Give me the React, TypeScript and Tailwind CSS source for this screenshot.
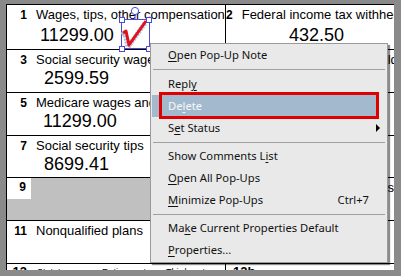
import React from 'react';

// context menu rows, u = index of the mnemonic letter
type MenuRow = { text?: string; u?: number; keys?: string; sub?: boolean; hot?: boolean; sep?: string };

const menu: MenuRow[] = [
  { text: 'Open Pop-Up Note', u: 0 },
  { sep: 'h-[7px]' },
  { text: 'Reply', u: 4 },
  { text: 'Delete', u: 2, hot: true },
  { text: 'Set Status', u: 1, sub: true },
  { sep: 'h-[6px]' },
  { text: 'Show Comments List', u: 15 },
  { text: 'Open All Pop-Ups', u: 0 },
  { text: 'Minimize Pop-Ups', u: 0, keys: 'Ctrl+7' },
  { sep: 'h-[6px]' },
  { text: 'Make Current Properties Default', u: 2 },
  { text: 'Properties...', u: 0 },
];

const Mnemonic = ({ text, u }: { text: string; u: number }) => (
  <span>
    {text.slice(0, u)}
    <span className="underline underline-offset-[2px] decoration-1">{text[u]}</span>
    {text.slice(u + 1)}
  </span>
);

const Label = ({ n, text }: { n: string; text: string }) => (
  <div className="flex items-center h-[16px] mt-[2px] whitespace-nowrap">
    <span className="w-[20px] text-right font-bold text-[12px]">{n}</span>
    <span className="ml-[9px] text-[13px]">{text}</span>
  </div>
);

const Value = ({ v, ml, mt = 'mt-0' }: { v: string; ml: string; mt?: string }) => (
  <div className={`text-[18px] leading-[21px] ${mt} ${ml}`}>{v}</div>
);

function Form() {
  return (
    <div className="grid grid-cols-[219px_1fr] grid-rows-[45px_43px_43px_42px_43px_43px_1fr] h-full font-['Liberation_Sans',Arial,sans-serif] text-black">
      {/* row 1 */}
      <div className="border-r border-b border-black">
        <Label n="1" text="Wages, tips, other compensation" />
        <Value v="11299.00" ml="ml-[33px]" mt="mt-[2px]" />
      </div>
      <div className="border-b border-black overflow-hidden">
        <Label n="2" text="Federal income tax withheld" />
        <Value v="432.50" ml="ml-[63px]" mt="mt-[2px]" />
      </div>
      {/* row 2 */}
      <div className="border-r border-b border-black">
        <Label n="3" text="Social security wages" />
        <Value v="2599.59" ml="ml-[37px]" />
      </div>
      <div className="border-b border-black overflow-hidden">
        <Label n="4" text="Social security tax withheld" />
      </div>
      {/* row 3 */}
      <div className="border-r border-b border-black">
        <Label n="5" text="Medicare wages and tips" />
        <Value v="11299.00" ml="ml-[36px]" />
      </div>
      <div className="border-b border-black overflow-hidden">
        <Label n="6" text="Medicare tax withheld" />
      </div>
      {/* row 4 */}
      <div className="border-r border-b border-black">
        <Label n="7" text="Social security tips" />
        <Value v="8699.41" ml="ml-[37px]" />
      </div>
      <div className="border-b border-black overflow-hidden">
        <Label n="8" text="Allocated tips" />
      </div>
      {/* row 5 */}
      <div className="border-r border-b border-black bg-[#c0c0c0]">
        <div className="w-[24px] h-[21px] bg-white flex justify-end pr-[5px] pt-[3px] font-bold text-[12px] leading-none">9</div>
      </div>
      <div className="border-b border-black overflow-hidden">
        <Label n="10" text="Dependent care benefits" />
      </div>
      {/* row 6 */}
      <div className="border-r border-b border-black">
        <Label n="11" text="Nonqualified plans" />
      </div>
      <div className="border-b border-black overflow-hidden">
        <div className="pl-[7px] pt-[2px] font-bold text-[13px]">12a</div>
      </div>
      {/* row 7 */}
      <div className="border-r border-black flex items-start whitespace-nowrap">
        <span className="w-[20px] text-right font-bold text-[13px] leading-[14px] mt-[1px]">13</span>
        <span className="ml-[10px] text-[9px] leading-[12px] mt-[2px]">Statutory</span>
        <span className="ml-[29px] text-[9px] leading-[12px] mt-[2px]">Retirement</span>
        <span className="ml-[20px] text-[9px] leading-[12px] mt-[2px]">Third-party</span>
      </div>
      <div className="overflow-hidden">
        <div className="pl-[7px] pt-[1px] font-bold text-[13px] leading-[14px]">12b</div>
      </div>
    </div>
  );
}

function CheckNote() {
  return (
    <div className="absolute left-[115px] top-[6px] w-[40px] h-[48px]">
      <svg width="40" height="48" viewBox="0 0 40 48">
        {/* rotate handle */}
        <line x1="20" y1="9" x2="20" y2="13" stroke="#4a4ad8" strokeWidth="1" />
        <circle cx="20" cy="5" r="3.6" fill="white" stroke="#4a4ad8" strokeWidth="1" />
        {/* bounding box */}
        <rect x="6.5" y="13.5" width="28" height="29" fill="none" stroke="#4a4ad8" strokeWidth="1" />
        {/* check shadow */}
        <path d="M8 27 L11 25 L14 39 L31 15" fill="none" stroke="#aebfd8" strokeWidth="5" strokeDasharray="2 1" strokeLinejoin="round" transform="translate(-1 2)" />
        {/* red check */}
        <path d="M8 27 L11 25 L14 39 L31 15" fill="none" stroke="#e0101c" strokeWidth="3" strokeLinejoin="round" />
        {/* handles */}
        <rect x="4.5" y="11.5" width="5" height="5" fill="white" stroke="#4a4ad8" />
        <rect x="31.5" y="11.5" width="5" height="5" fill="white" stroke="#4a4ad8" />
        <rect x="4.5" y="40.5" width="5" height="5" fill="white" stroke="#4a4ad8" />
        <rect x="31.5" y="40.5" width="5" height="5" fill="white" stroke="#4a4ad8" />
      </svg>
    </div>
  );
}

function ContextMenu() {
  return (
    <div className="absolute left-[150px] top-[43px] w-[238px] h-[220px] bg-[#e9e9e9] border border-[#9a9a9a] shadow-[2px_2px_1px_rgba(0,0,0,0.45)] font-['Noto_Sans',sans-serif] text-[11.2px] text-[#111]">
      {menu.map((m, i) =>
        m.sep ? (
          <div key={i} className={`${m.sep} flex items-center px-[2px]`}>
            <div className="h-px w-full bg-[#a0a0a0]" />
          </div>
        ) : (
          <div
            key={i}
            className={`h-[22px] flex items-center whitespace-nowrap ${
              m.hot ? 'ml-[1px] mr-[11px] pl-[16px] bg-[#a3b9cd] text-[#f6f8fa]' : 'pl-[17px] pr-[18px]'
            }`}
          >
            <Mnemonic text={m.text!} u={m.u!} />
            {m.keys && <span className="ml-auto">{m.keys}</span>}
            {m.sub && (
              <span className="ml-auto mr-[-11px] w-0 h-0 border-y-[4px] border-y-transparent border-l-[4px] border-l-black" />
            )}
          </div>
        )
      )}
    </div>
  );
}

export default function App() {
  return (
    <div className="relative w-[401px] h-[276px] bg-[#8a8a8a] pl-[6px] pt-[4px] pr-[7px] pb-[6px] overflow-hidden">
      <div className="h-full bg-white border-l border-t border-black overflow-hidden">
        <Form />
      </div>
      <CheckNote />
      <ContextMenu />
      {/* highlight frame drawn over the Delete entry */}
      <div className="absolute left-[159px] top-[92px] w-[220px] h-[27px] border-[3px] border-[#e00000]" />
    </div>
  );
}
